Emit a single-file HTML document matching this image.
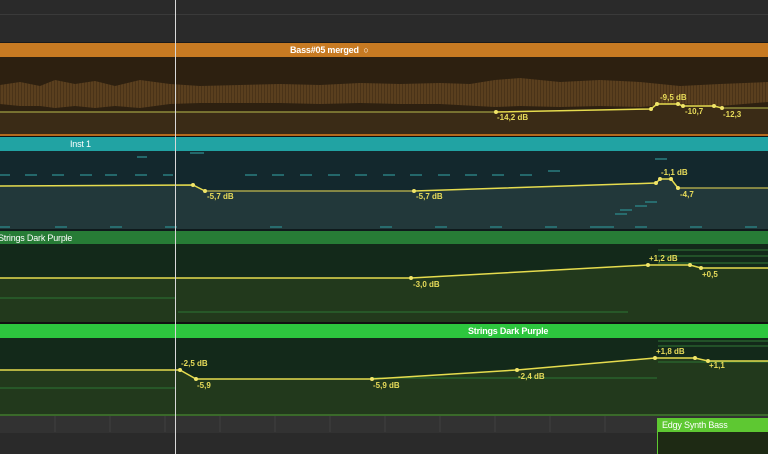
<!DOCTYPE html>
<html><head><meta charset="utf-8"><style>
html,body{margin:0;padding:0;background:#2b2b2b;width:768px;height:454px;overflow:hidden;font-family:"Liberation Sans",sans-serif}
.a{position:absolute}
.t{position:absolute;font-size:9px;color:#fff;white-space:nowrap;font-weight:bold;letter-spacing:-0.2px}
.l{position:absolute;font-size:8px;color:#e8dc5a;font-weight:bold;white-space:nowrap}
</style></head><body>
<div class="a" style="left:0;top:0;width:768px;height:43px;background:#2a2a2a"></div>
<div class="a" style="left:0;top:14px;width:768px;height:1px;background:#3a3a3a"></div>
<div class="a" style="left:0;top:42px;width:768px;height:1px;background:#1a1a1a"></div>
<!-- Bass -->
<div class="a" style="left:0;top:43px;width:768px;height:14px;background:#c77a22"></div>
<div class="t" style="left:290px;top:45px">Bass#05 merged &nbsp;○</div>
<div class="a" style="left:0;top:57px;width:768px;height:77px;background:#2d2010"></div>
<div class="a" style="left:0;top:134px;width:768px;height:2px;background:#b36a1e"></div>
<!-- Inst -->
<div class="a" style="left:0;top:136px;width:768px;height:1px;background:#111"></div>
<div class="a" style="left:0;top:137px;width:768px;height:14px;background:#21a3a3"></div>
<div class="t" style="left:70px;top:139px;font-weight:normal">Inst 1</div>
<div class="a" style="left:0;top:151px;width:768px;height:78px;background:#13282d"></div>
<div class="a" style="left:0;top:229px;width:768px;height:2px;background:#0f1a1c"></div>
<!-- Strings 1 -->
<div class="a" style="left:0;top:231px;width:768px;height:13px;background:#277c36"></div>
<div class="t" style="left:-2px;top:233px;font-weight:normal">Strings Dark Purple</div>
<div class="a" style="left:0;top:244px;width:768px;height:78px;background:#13291a"></div>
<div class="a" style="left:0;top:322px;width:768px;height:2px;background:#111"></div>
<!-- Strings 2 -->
<div class="a" style="left:0;top:324px;width:768px;height:14px;background:#2dc63e"></div>
<div class="t" style="left:468px;top:326px">Strings Dark Purple</div>
<div class="a" style="left:0;top:338px;width:768px;height:76px;background:#13291a"></div>
<div class="a" style="left:0;top:414px;width:768px;height:2px;background:#3a6a2a"></div>
<div class="a" style="left:0;top:416px;width:768px;height:17px;background:#323232"></div>
<div class="a" style="left:0;top:433px;width:768px;height:21px;background:#2a2a2a"></div>
<svg class="a" style="left:0;top:0" width="768" height="454">
<defs>
<pattern id="wv" width="3" height="40" patternUnits="userSpaceOnUse">
<rect width="3" height="40" fill="#5a3f1e"/><rect width="1" height="40" fill="#4a3318"/>
</pattern>
</defs>
<path fill="url(#wv)" d="M0 85 L20 82 L40 86 L55 80 L75 84 L95 81 L115 86 L140 80 L170 84 L200 86 L240 85 L280 84 L320 85 L360 83 L400 84 L440 83 L470 84 L495 80 L520 78 L560 82 L600 80 L640 82 L680 86 L720 84 L768 82 L768 102 L720 106 L680 104 L640 107 L600 106 L560 107 L520 106 L495 107 L440 104 L400 104 L360 103 L320 104 L280 103 L240 103 L200 103 L170 104 L140 108 L115 106 L95 108 L75 106 L55 108 L40 106 L20 106 L0 104Z"/>
<polygon points="0,112 496,112 651,109 657,104 678,104 683,106 714,106 722,108 768,108 768,134 0,134" fill="#3a2b16"/>
<polygon points="0,186 193,185 205,191 414,191 656,183 660,179 671,179 678,188 768,188 768,229 0,229" fill="#22383a"/>
<polygon points="0,278 411,278 648,265 690,265 701,268 768,268 768,322 0,322" fill="#22391c"/>
<polygon points="0,370 180,370 196,379 372,379 517,370 655,358 695,358 708,361 768,361 768,414 0,414" fill="#22391c"/>
<g stroke="#2a7d80" stroke-width="1.5">
<path d="M0 175h10M25 175h12M52 175h12M80 175h12M105 175h12M135 175h12M163 175h10M245 175h12M272 175h12M300 175h12M328 175h12M355 175h12M383 175h12M410 175h12M438 175h12M465 175h12M492 175h12M520 175h12M190 153h14M548 171h12M655 159h12M620 210h12M635 206h12M645 202h12M615 214h12M0 227h10M55 227h12M110 227h12M165 227h12M270 227h12M380 227h12M435 227h12M490 227h12M545 227h12M590 227h24M635 227h12M690 227h12M745 227h12M137 157h10"/>
</g>
<g stroke="#2b6a30" stroke-width="1.2">
<path d="M0 298h175M178 312h450M658 250h110M658 256h110M658 263h110M0 388h175M658 341h110M658 346h110M658 362h110M370 378h287"/>
</g>
<g stroke="#404040"><path d="M55 416v16M110 416v16M165 416v16M220 416v16M275 416v16M330 416v16M385 416v16M440 416v16M495 416v16M550 416v16M605 416v16"/></g>
<g fill="none" stroke-width="1.5">
<polyline stroke="#8d8a3a" points="0,112 496,112"/>
<polyline stroke="#e6dc4e" points="496,112 651,109 657,104 678,104 683,106 714,106 722,108"/>
<polyline stroke="#8d8a3a" points="722,108 768,108"/>
<polyline stroke="#e6dc4e" points="0,186 193,185 205,191"/>
<polyline stroke="#a8a24a" points="205,191 414,191"/>
<polyline stroke="#e6dc4e" points="414,191 656,183 660,179 671,179 678,188"/>
<polyline stroke="#a8a24a" points="678,188 768,188"/>
<polyline stroke="#e6dc4e" points="0,278 411,278 648,265 690,265 701,268 768,268"/>
<polyline stroke="#e6dc4e" points="0,370 180,370 196,379 372,379 517,370 655,358 695,358 708,361 768,361"/>
</g>
<g fill="#f0e468">
<circle cx="496" cy="112" r="2"/><circle cx="651" cy="109" r="2"/><circle cx="657" cy="104" r="2"/><circle cx="678" cy="104" r="2"/><circle cx="683" cy="106" r="2"/><circle cx="714" cy="106" r="2"/><circle cx="722" cy="108" r="2"/>
<circle cx="193" cy="185" r="2"/><circle cx="205" cy="191" r="2"/><circle cx="414" cy="191" r="2"/><circle cx="656" cy="183" r="2"/><circle cx="660" cy="179" r="2"/><circle cx="671" cy="179" r="2"/><circle cx="678" cy="188" r="2"/>
<circle cx="411" cy="278" r="2"/><circle cx="648" cy="265" r="2"/><circle cx="690" cy="265" r="2"/><circle cx="701" cy="268" r="2"/>
<circle cx="180" cy="370" r="2"/><circle cx="196" cy="379" r="2"/><circle cx="372" cy="379" r="2"/><circle cx="517" cy="370" r="2"/><circle cx="655" cy="358" r="2"/><circle cx="695" cy="358" r="2"/><circle cx="708" cy="361" r="2"/>
</g>
</svg>
<div class="l" style="left:497px;top:113px">-14,2 dB</div>
<div class="l" style="left:660px;top:93px">-9,5 dB</div>
<div class="l" style="left:685px;top:107px">-10,7</div>
<div class="l" style="left:723px;top:110px">-12,3</div>
<div class="l" style="left:207px;top:192px">-5,7 dB</div>
<div class="l" style="left:416px;top:192px">-5,7 dB</div>
<div class="l" style="left:661px;top:168px">-1,1 dB</div>
<div class="l" style="left:680px;top:190px">-4,7</div>
<div class="l" style="left:413px;top:280px">-3,0 dB</div>
<div class="l" style="left:649px;top:254px">+1,2 dB</div>
<div class="l" style="left:702px;top:270px">+0,5</div>
<div class="l" style="left:181px;top:359px">-2,5 dB</div>
<div class="l" style="left:197px;top:381px">-5,9</div>
<div class="l" style="left:373px;top:381px">-5,9 dB</div>
<div class="l" style="left:518px;top:372px">-2,4 dB</div>
<div class="l" style="left:656px;top:347px">+1,8 dB</div>
<div class="l" style="left:709px;top:361px">+1,1</div>
<div class="a" style="left:657px;top:418px;width:111px;height:36px;background:#1e2a14;border-left:1px solid #5ec832"></div>
<div class="a" style="left:657px;top:418px;width:111px;height:14px;background:#5ec832"></div>
<div class="t" style="left:662px;top:420px;font-weight:normal">Edgy Synth Bass</div>
<div class="a" style="left:175px;top:0;width:1px;height:454px;background:#d8d8d8"></div>
</body></html>
